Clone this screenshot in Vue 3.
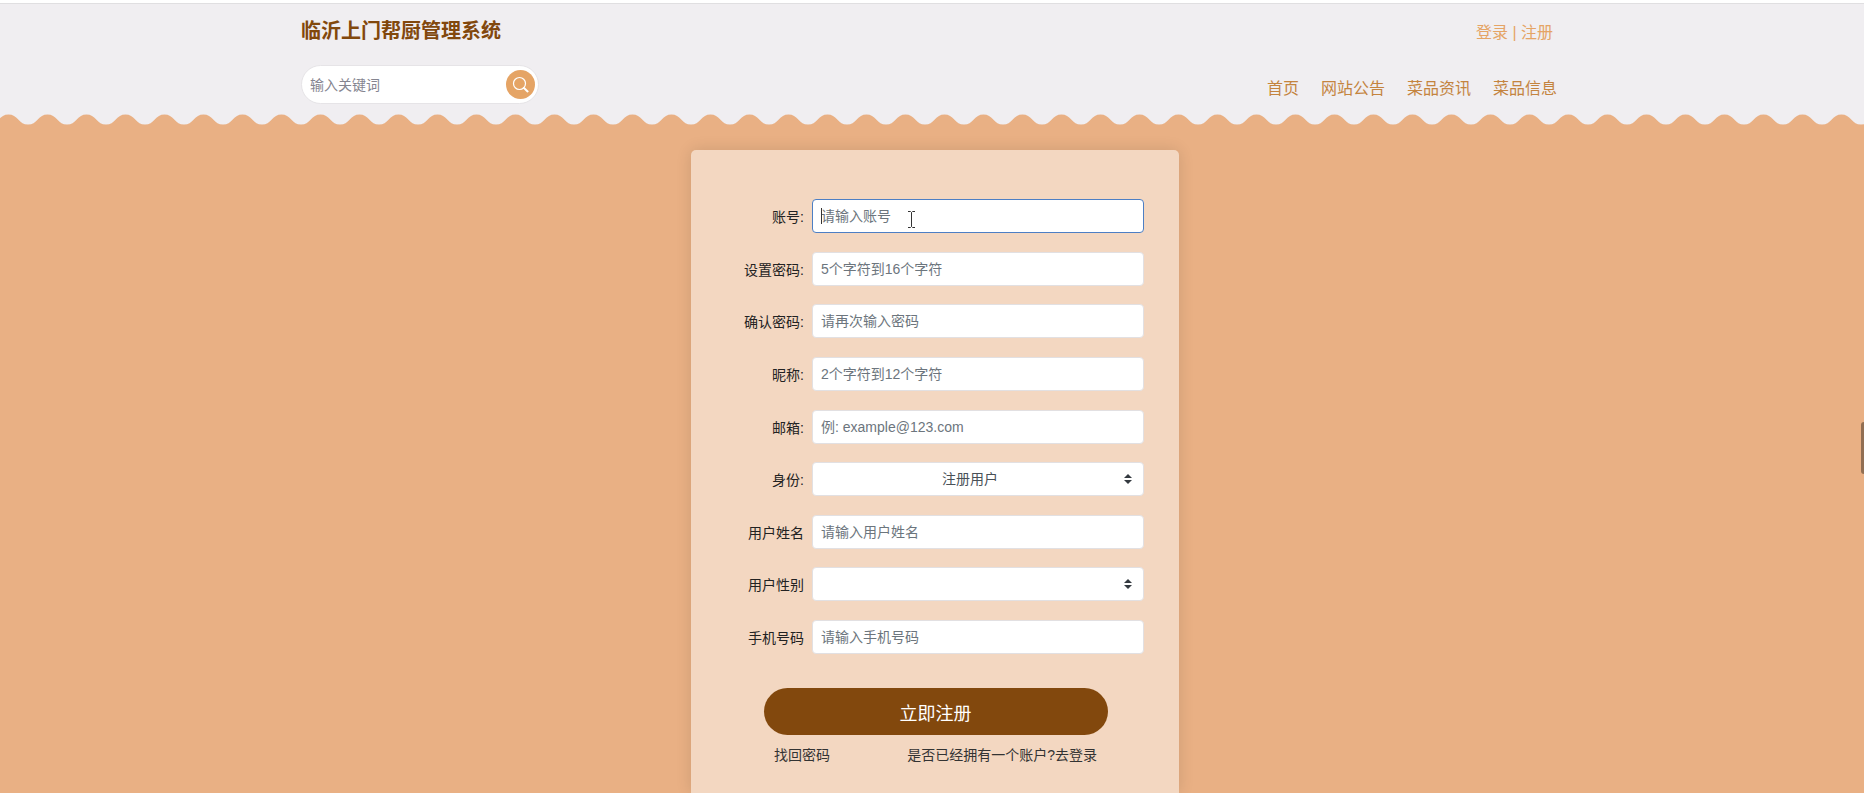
<script setup>
import { ref } from 'vue'

const keyword = ref('')
const navItems = ['首页', '网站公告', '菜品资讯', '菜品信息']

const fields = [
  { id: 'account', label: '账号:', placeholder: '请输入账号', type: 'text', active: true },
  { id: 'password', label: '设置密码:', placeholder: '5个字符到16个字符', type: 'password' },
  { id: 'confirm', label: '确认密码:', placeholder: '请再次输入密码', type: 'password' },
  { id: 'nickname', label: '昵称:', placeholder: '2个字符到12个字符', type: 'text' },
  { id: 'email', label: '邮箱:', placeholder: '例: example@123.com', type: 'email' },
  { id: 'role', label: '身份:', options: ['注册用户'] },
  { id: 'name', label: '用户姓名', placeholder: '请输入用户姓名', type: 'text' },
  { id: 'gender', label: '用户性别', options: [''] },
  { id: 'phone', label: '手机号码', placeholder: '请输入手机号码', type: 'tel' },
]
</script>

<template>
  <div class="page">
    <header class="header">
      <div class="container">
        <div class="row">
          <h1 class="title">临沂上门帮厨管理系统</h1>
          <div class="account"><a href="#">登录</a> | <a href="#">注册</a></div>
        </div>
        <div class="row">
          <form class="search" @submit.prevent>
            <input v-model="keyword" type="text" placeholder="输入关键词" aria-label="输入关键词" />
            <button type="submit" aria-label="搜索">
              <svg width="17" height="17" viewBox="0 0 17 17" fill="none" stroke="#fff" stroke-linecap="round">
                <circle cx="7.5" cy="7.5" r="6" stroke-width="1.2" />
                <path d="M12 12l3.6 3.4" stroke-width="2" />
              </svg>
            </button>
          </form>
          <nav class="nav">
            <a v-for="item in navItems" :key="item" href="#">{{ item }}</a>
          </nav>
        </div>
      </div>
    </header>

    <svg class="wave" width="100%" height="12" aria-hidden="true">
      <defs>
        <pattern id="scallop" x="-11" width="39" height="12" patternUnits="userSpaceOnUse">
          <path
            d="M0 0H39V10.5C34.5 10.5 32 8.5 29.25 5.5C26.5 2.5 24 0.5 19.5 0.5C15 0.5 12.5 2.5 9.75 5.5C7 8.5 4.5 10.5 0 10.5Z"
            fill="#f0eef1"
          />
        </pattern>
      </defs>
      <rect width="100%" height="12" fill="url(#scallop)" />
    </svg>

    <main class="main">
      <form class="card" @submit.prevent>
        <div class="fields">
          <div v-for="field in fields" :key="field.id" class="field">
            <label :for="field.id">{{ field.label }}</label>
            <div class="control">
              <select v-if="field.options" :id="field.id">
                <option v-for="option in field.options" :key="option">{{ option }}</option>
              </select>
              <input
                v-else
                :id="field.id"
                :type="field.type"
                :placeholder="field.placeholder"
                :class="{ active: field.active }"
              />
              <svg v-if="field.options" class="arrows" width="8" height="10" viewBox="0 0 8 10" fill="#343a40">
                <path d="M4 0L8 4H0ZM0 6H8L4 10Z" />
              </svg>
              <template v-if="field.active">
                <span class="caret"></span>
                <svg class="pointer" width="9" height="17" viewBox="0 0 9 17" fill="none" stroke="#333">
                  <path d="M1 .5H3.5L4.5 1.5L5.5 .5H8M4.5 1.5V15.5M1 16.5H3.5L4.5 15.5L5.5 16.5H8" />
                </svg>
              </template>
            </div>
          </div>
        </div>
        <button class="submit" type="submit">立即注册</button>
        <div class="links">
          <a href="#">找回密码</a>
          <a href="#">是否已经拥有一个账户?去登录</a>
        </div>
      </form>
    </main>

    <button class="side-tab" type="button" aria-label="侧栏"></button>
  </div>
</template>

<style>
body {
  margin: 0;
  background: #e9b084;
}
</style>

<style scoped>
.page {
  display: flex;
  flex-direction: column;
  min-height: 100vh;
  font-family: "Liberation Sans", "Noto Sans CJK SC", sans-serif;
  font-size: 14px;
  color: #333;
  background: #e9b084;
}
.page *,
.page {
  box-sizing: border-box;
}
a {
  color: inherit;
  text-decoration: none;
}
input,
select,
button {
  font: inherit;
  margin: 0;
}
.header {
  border-top: 3px solid #fff;
  background: #f0eef1;
}
.container {
  max-width: 1262px;
  margin: 0 auto;
}
.header::before {
  content: "";
  display: block;
  height: 1px;
  background: #e0dfe1;
}
.row {
  display: flex;
  justify-content: space-between;
}
.title {
  margin: 0;
  padding-top: 12px;
  height: 61px;
  font-size: 20px;
  line-height: 30px;
  font-weight: 700;
  color: #82480d;
}
.account {
  padding: 17px 10px 0 0;
  font-size: 16px;
  line-height: 24px;
  color: #e5a465;
}
.search {
  display: flex;
  align-items: center;
  width: 238px;
  height: 39px;
  margin-bottom: 10px;
  padding: 0 3px 0 8px;
  border: 1px solid #e6e4e7;
  border-radius: 20px;
  background: #fff;
}
.search input {
  flex: 1;
  min-width: 0;
  padding: 0;
  border: 0;
  outline: 0;
  background: transparent;
}
.search input::placeholder {
  color: #858590;
  opacity: 1;
}
.search button {
  display: flex;
  align-items: center;
  justify-content: center;
  width: 29px;
  height: 29px;
  padding: 0;
  border: 0;
  border-radius: 50%;
  background: #e5a465;
}
.nav {
  display: flex;
  gap: 22px;
  padding: 12px 6px 0 0;
  font-size: 16px;
  line-height: 24px;
  color: #c4843f;
}
.wave {
  display: block;
}
.main {
  flex: 1;
  display: flex;
  justify-content: center;
  padding: 24px 0 0 6px;
}
.card {
  width: 488px;
  padding: 49px 35px 24px 36px;
  border-radius: 5px 5px 0 0;
  background: #f3d7c1;
  box-shadow: 0 0 16px rgba(0, 0, 0, 0.12);
}
.fields {
  display: flex;
  flex-direction: column;
  justify-content: space-between;
  min-height: 456px;
}
.field {
  display: flex;
  gap: 8px;
}
.field label {
  flex: 1;
  padding-top: 1px;
  line-height: 34px;
  text-align: right;
  color: #222;
}
.control {
  position: relative;
  width: 332px;
}
.control input,
.control select {
  display: block;
  width: 100%;
  height: 34px;
  padding: 0 8px;
  border: 1px solid #e2e0e2;
  border-radius: 4px;
  outline: 0;
  background: #fff;
  color: #495057;
}
.control input::placeholder {
  color: #6c757d;
  opacity: 1;
}
.control input.active {
  border-color: #4d7fc4;
}
.control select {
  appearance: none;
  padding-right: 24px;
  text-align: center;
  text-align-last: center;
}
.arrows {
  position: absolute;
  top: 12px;
  right: 12px;
  pointer-events: none;
}
.caret {
  position: absolute;
  top: 9px;
  left: 9px;
  width: 1px;
  height: 16px;
  background: #333;
}
.pointer {
  position: absolute;
  top: 12px;
  left: 95px;
  pointer-events: none;
}
.submit {
  display: block;
  width: 344px;
  height: 47px;
  margin: 33px auto 0;
  border: 0;
  border-radius: 24px;
  background: #82480d;
  color: #fff;
  font-size: 18px;
}
.links {
  display: flex;
  justify-content: space-between;
  padding: 10px 47px 0 47px;
  line-height: 20px;
}
.side-tab {
  position: fixed;
  top: 422px;
  right: 0;
  width: 3px;
  height: 52px;
  padding: 0;
  border: 0;
  border-radius: 3px 0 0 3px;
  background: #926f53;
}
</style>
